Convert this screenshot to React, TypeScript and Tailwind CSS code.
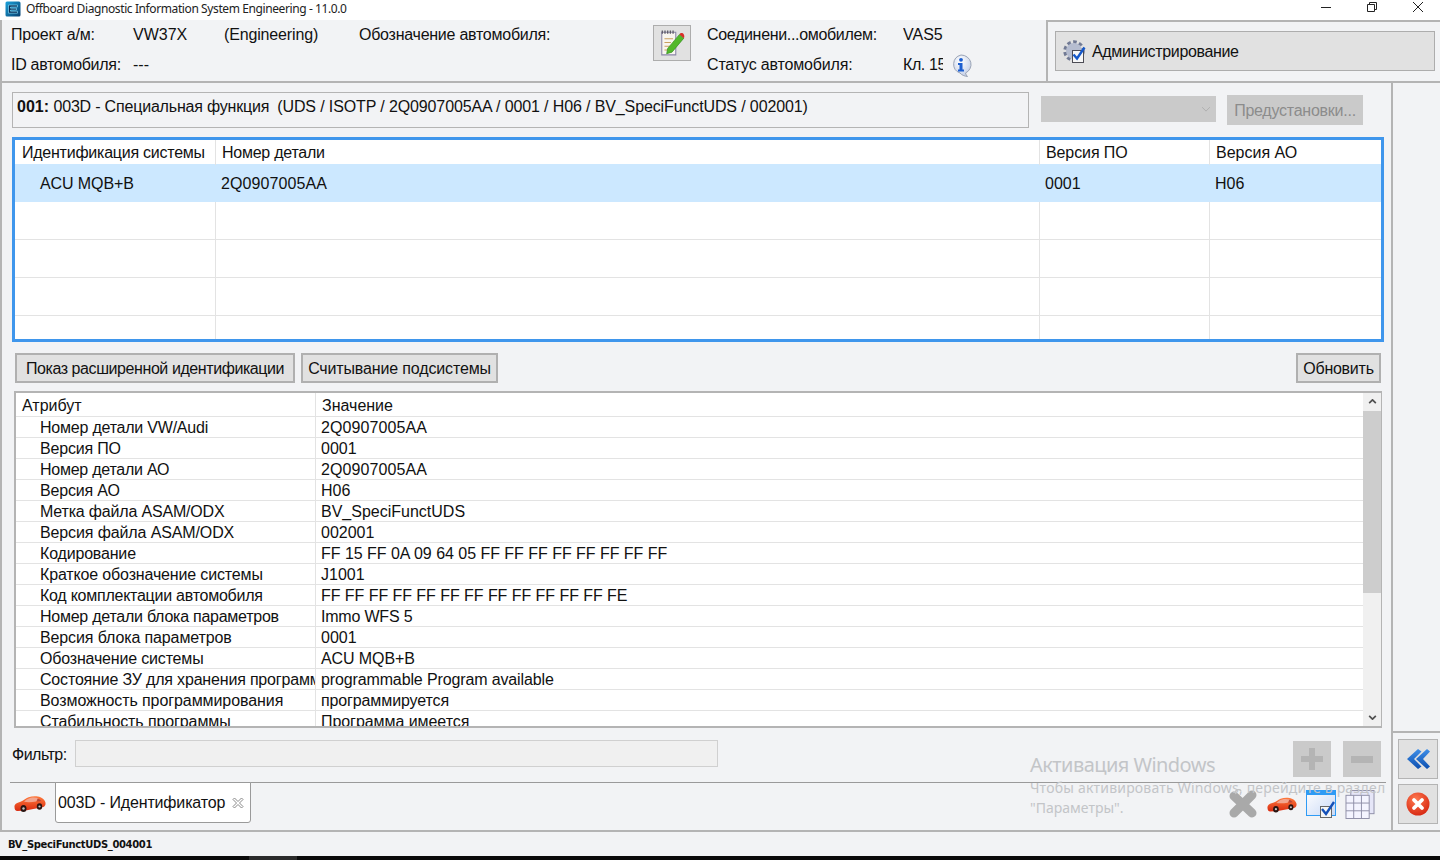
const attrs: [string, string, string?, string?][] = [
  ["Номер детали VW/Audi", "2Q0907005AA", "tracking-[0.1px]", "tracking-[-0.22px]"],
  ["Версия ПО", "0001"],
  ["Номер детали АО", "2Q0907005AA", "tracking-[0.1px]", "tracking-[-0.25px]"],
  ["Версия АО", "H06"],
  ["Метка файла ASAM/ODX", "BV_SpeciFunctUDS"],
  ["Версия файла ASAM/ODX", "002001", "", "tracking-[-0.12px]"],
  ["Кодирование", "FF 15 FF 0A 09 64 05 FF FF FF FF FF FF FF FF", "tracking-[-0.03px]"],
  ["Краткое обозначение системы", "J1001", "", "tracking-[-0.15px]"],
  ["Код комплектации автомобиля", "FF FF FF FF FF FF FF FF FF FF FF FF FE", "tracking-[-0.05px]", "tracking-[-0.25px]"],
  ["Номер детали блока параметров", "Immo WFS 5", "tracking-[-0.2px]", "tracking-[-0.25px]"],
  ["Версия блока параметров", "0001", "", "tracking-[-0.12px]"],
  ["Обозначение системы", "ACU MQB+B", "tracking-[-0.1px]"],
  ["Состояние ЗУ для хранения программ", "programmable Program available", "tracking-[-0.13px]"],
  ["Возможность программирования", "программируется", "tracking-[-0.12px]", "tracking-[-0.08px]"],
  ["Стабильность программы", "Программа имеется", "tracking-[-0.06px]", "tracking-[-0.1px]"],
];

function Car({ className }: { className?: string }) {
  return (
    <svg viewBox="0 0 32 20" className={className}>
      <defs>
        <linearGradient id="carBody" x1="0" y1="0" x2="0" y2="1">
          <stop offset="0" stopColor="#ff7a3c" />
          <stop offset="1" stopColor="#d92a10" />
        </linearGradient>
      </defs>
      <path d="M.5 14c-.3-2.500 2-4.300 6-5.300 3-.7 5-3.400 8-4.400 4-1.300 9-1.200 12 0 2.500 1 4.500 3 5 5.500.3 2-.5 3.500-2 4.200l-5 1-13 2.500-8 .5c-2 0-3-1.500-3-4z" fill="url(#carBody)" />
      <path d="M10 8.800c1.500-1.500 3.500-3 6-3.700 3-.8 6-.6 8.500.2l-2.500 3.300c-4 .6-8.500.8-12 .2z" fill="#f2a58f" />
      <path d="M23.500 5.500c1.500.4 3 1.300 3.800 2.500l-4.300.6z" fill="#b8473a" />
      <ellipse cx="9.500" cy="15.500" rx="3" ry="3.500" fill="#2a1512" />
      <ellipse cx="25.500" cy="13.500" rx="2.700" ry="3.200" fill="#2a1512" />
      <circle cx="9.500" cy="15.500" r="1.200" fill="#c4c4c4" />
      <circle cx="25.500" cy="13.500" r="1.100" fill="#c4c4c4" />
    </svg>
  );
}

function Btn({ children, className }: { children: React.ReactNode; className?: string }) {
  return (
    <div className={`h-[30px] pt-px flex items-center justify-center bg-[#e1e1e1] border-2 border-[#b0b0b0] text-[#111] whitespace-nowrap ${className ?? ""}`}>
      {children}
    </div>
  );
}

const colsTop = "grid grid-cols-[201px_824px_170px_1fr]";
const colsAttr = "grid grid-cols-[300px_1fr]";

export default function App() {
  return (
    <div className="w-[1440px] h-[860px] overflow-hidden flex flex-col bg-[#f2f3f5] text-[16px] text-[#111] relative font-['Liberation_Sans',Arial,sans-serif]">
      {/* title bar */}
      <div className="h-5 shrink-0 bg-white flex items-center pl-[5px]">
        <svg viewBox="0 0 16 16" className="w-[16px] h-[16px] mr-[5px] -mt-[3px]">
          <defs>
            <linearGradient id="odis" x1="0" y1="0" x2="1" y2="1">
              <stop offset="0" stopColor="#1aa2dc" />
              <stop offset="1" stopColor="#07406f" />
            </linearGradient>
          </defs>
          <rect x=".5" y=".5" width="15" height="15" rx="1.500" fill="url(#odis)" />
          <path d="M3.500 4h9v2h-7v1.200h6v1.800h-6v1.200h7v2h-9z" fill="#0a2d55" stroke="#7fd6f3" strokeWidth=".7" />
        </svg>
        <span className="text-[12px] -mt-[2px] text-[#222] font-['Noto_Sans',sans-serif] tracking-[-0.4px]">Offboard Diagnostic Information System Engineering - 11.0.0</span>
        <div className="ml-auto flex items-center -mt-[6px]">
          <div className="w-[46px] flex justify-center">
            <div className="w-[10px] h-px bg-[#222]" />
          </div>
          <svg viewBox="0 0 10 10" className="w-[10px] h-[10px] mx-[18px]" fill="none" stroke="#222">
            <path d="M.5 2.500h7v7h-7zM2.500 2.500v-2h7v7h-2" />
          </svg>
          <svg viewBox="0 0 10 10" className="w-[10px] h-[10px] ml-[18px] mr-[17px]" fill="none" stroke="#222">
            <path d="M0 0l10 10M10 0L0 10" />
          </svg>
        </div>
      </div>

      {/* header */}
      <div className="h-[63px] shrink-0 flex border-b-2 border-[#b4b4b4] border-l-2">
        <div className="w-[1044px] shrink-0 relative pl-[9px]">
          <div className="flex items-center h-[29px]">
            <span className="w-[122px] tracking-[-0.2px]">Проект а/м:</span>
            <span className="w-[91px]">VW37X</span>
            <span className="w-[135px] tracking-[-0.15px]">(Engineering)</span>
            <span className="tracking-[-0.25px]">Обозначение автомобиля:</span>
          </div>
          <div className="flex items-center h-[31px]">
            <span className="w-[122px] tracking-[-0.3px]">ID автомобиля:</span>
            <span>---</span>
          </div>
          <div className="absolute left-[651px] top-[5px] w-[38px] h-[36px] bg-[#e1e1e1] border border-[#adadad] flex items-center justify-center">
            <svg viewBox="0 0 24 26" className="w-[26px] h-[28px]">
              <path d="M2.500 3h13v21h-13z" fill="#f8f5ef" stroke="#8b86a8" />
              <path d="M3 1.500v3M5.500 1.500v3M8 1.500v3M10.500 1.500v3M13 1.500v3" stroke="#5d5a66" strokeWidth="1.200" />
              <path d="M5 9h8M5 12.500h6M5 16h5M5 19.500h8" stroke="#c9a05f" />
              <path d="M19 5l4 3.500-11 13-5 1.500 1-5z" fill="#52b82a" stroke="#2f8a1a" strokeWidth=".6" />
              <path d="M19 5c1-1.800 3-1.500 4 0 .6 1.200.5 2.500 0 3.500z" fill="#d92f2a" />
            </svg>
          </div>
          <div className="absolute left-[705px] top-0 w-[240px]">
            <div className="flex items-center h-[29px]">
              <span className="w-[196px] tracking-[-0.33px]">Соединени...омобилем:</span>
              <span className="w-[40px] overflow-hidden whitespace-nowrap">VAS5054</span>
            </div>
            <div className="flex items-center h-[31px]">
              <span className="w-[196px] tracking-[-0.17px]">Статус автомобиля:</span>
              <span className="w-[40px] overflow-hidden whitespace-nowrap tracking-[-0.4px]">Кл. 15</span>
            </div>
          </div>
          <svg viewBox="0 0 24 24" className="absolute left-[947px] top-[34px] w-[24px] h-[24px]">
            <defs>
              <radialGradient id="infoB" cx=".4" cy=".3" r=".8">
                <stop offset="0" stopColor="#ffffff" />
                <stop offset="1" stopColor="#bcc9e4" />
              </radialGradient>
            </defs>
            <path d="M12 1a10 9.500 0 0 1 4.500 18c.3 1.500 1 2.500 2 3.500-3-.3-6-1.500-7.500-3.500a10 9.500 0 0 1 1-18z" fill="url(#infoB)" stroke="#9aa3b5" />
            <circle cx="12" cy="5.800" r="1.900" fill="#1d5fd0" />
            <path d="M9 9h4.500v6.500H15V17.500H9v-2h1.500V11H9z" fill="#1d5fd0" />
          </svg>
        </div>
        <div className="flex-1 border-l-2 border-t-2 border-[#b4b4b4] pl-[7px] pt-[9px] pr-[5px]">
          <div className="h-[40px] pt-[2px] bg-[#e1e1e1] border border-[#adadad] flex items-center pl-[6px] gap-[4px]">
            <svg viewBox="0 0 24 24" className="w-[26px] h-[24px]">
              <circle cx="11" cy="11" r="9" fill="none" stroke="#717a94" strokeWidth="3.500" strokeDasharray="3.500 2.400" />
              <circle cx="11" cy="11" r="8" fill="#b6bdd0" />
              <rect x="9.500" y="10.500" width="11" height="12" fill="#f7f7f7" stroke="#4c4c55" />
              <path d="M10.500 14.500l3.500 4 7.500-11" fill="none" stroke="#1658c9" strokeWidth="2.400" />
            </svg>
            <span className="tracking-[-0.35px]">Администрирование</span>
          </div>
        </div>
      </div>

      {/* body */}
      <div className="flex-1 flex min-h-0">
        <div className="w-[1393px] shrink-0 flex flex-col border-x-2 border-[#b4b4b4] pl-[8px] pr-[7px]">
          {/* function line */}
          <div className="h-[54px] shrink-0 flex items-start pl-[2px]">
            <div className="w-[1017px] h-[36px] mt-[9px] border border-[#b4b4b4] pl-[4px] pt-[2px] whitespace-nowrap">
              <b>001:</b> <span className="tracking-[-0.19px]">003D - Специальная функция</span>
              <span className="ml-[8px] tracking-[-0.12px]">(UDS / ISOTP / 2Q0907005AA / 0001 / H06 / BV_SpeciFunctUDS / 002001)</span>
            </div>
            <div className="w-[175px] h-[26px] ml-[12px] mt-[13px] bg-[#cacaca] flex items-center justify-end pr-[6px]">
              <svg viewBox="0 0 10 6" className="w-[8px] h-[5px]" fill="none" stroke="#a8a8a8"><path d="M0 0l5 5 5-5" /></svg>
            </div>
            <div className="w-[136px] h-[30px] ml-[11px] mt-[12px] pt-[2px] bg-[#cacaca] text-[#8c8c8c] flex items-center justify-center tracking-[-0.25px]">Предустановки...</div>
          </div>

          {/* systems table */}
          <div className="w-[1372px] h-[205px] ml-[2px] shrink-0 border-[3px] border-[#3f96ec] bg-white overflow-hidden">
            <div className={`${colsTop} h-[24px]`}>
              <span className="pl-[7px] pt-px flex items-center border-r border-[#e3e3e3] whitespace-nowrap tracking-[-0.24px]">Идентификация системы</span>
              <span className="pl-[6px] pt-px flex items-center border-r border-[#e3e3e3] tracking-[-0.25px]">Номер детали</span>
              <span className="pl-[6px] pt-px flex items-center border-r border-[#e3e3e3] tracking-[-0.1px]">Версия ПО</span>
              <span className="pl-[6px] pt-px flex items-center">Версия АО</span>
            </div>
            <div className={`${colsTop} h-[38px] bg-[#cce8ff] items-center pt-[2px]`}>
              <span className="pl-[25px] tracking-[-0.1px]">ACU MQB+B</span>
              <span className="pl-[5px] tracking-[0.1px]">2Q0907005AA</span>
              <span className="pl-[5px]">0001</span>
              <span className="pl-[5px]">H06</span>
            </div>
            {[0, 1, 2, 3].map((i) => (
              <div key={i} className={`${colsTop} h-[38px] border-b border-[#e3e3e3]`}>
                <span className="border-r border-[#e3e3e3]" />
                <span className="border-r border-[#e3e3e3]" />
                <span className="border-r border-[#e3e3e3]" />
                <span />
              </div>
            ))}
          </div>

          {/* buttons */}
          <div className="h-[49px] shrink-0 flex items-center pl-[5px] pr-[3px] gap-[6px] pt-[3px]">
            <Btn className="w-[280px] tracking-[-0.42px]">Показ расширенной идентификации</Btn>
            <Btn className="w-[197px] tracking-[-0.15px]">Считывание подсистемы</Btn>
            <Btn className="w-[85px] ml-auto tracking-[-0.25px]">Обновить</Btn>
          </div>

          {/* attributes table */}
          <div className="w-[1368px] h-[337px] shrink-0 ml-[4px] border-y-2 border-l-2 border-r border-[#b4b4b4] bg-white flex overflow-hidden">
            <div className="flex-1 min-w-0 overflow-hidden">
              <div className={`${colsAttr} h-[24px] border-b border-[#e3e3e3]`}>
                <span className="pl-[6px] pt-[3px] leading-[20px] border-r border-[#e3e3e3]">Атрибут</span>
                <span className="pl-[6px] pt-[3px] leading-[20px]">Значение</span>
              </div>
              {attrs.map(([a, v, tr, tl]) => (
                <div key={a} className={`${colsAttr} h-[21px] border-b border-[#e3e3e3]`}>
                  <span className={`pl-[24px] pt-[2px] leading-[18px] border-r border-[#e3e3e3] overflow-hidden whitespace-nowrap ${tl ?? "tracking-[-0.18px]"}`}>{a}</span>
                  <span className={`pl-[5px] pt-[2px] leading-[18px] ${tr ?? ""}`}>{v}</span>
                </div>
              ))}
            </div>
            <div className="w-[18px] shrink-0 bg-[#f0f0f0] flex flex-col items-center">
              <svg viewBox="0 0 10 6" className="w-[9px] h-[5px] mt-[6px] mb-[7px]" fill="none" stroke="#505050" strokeWidth="2"><path d="M1 5l4-4 4 4" /></svg>
              <div className="w-full h-[182px] bg-[#cdcdcd]" />
              <svg viewBox="0 0 10 6" className="w-[9px] h-[5px] mt-auto mb-[6px]" fill="none" stroke="#505050" strokeWidth="2"><path d="M1 1l4 4 4-4" /></svg>
            </div>
          </div>

          {/* filter */}
          <div className="h-[54px] shrink-0 flex items-start pl-[2px] pr-[3px]">
            <span className="w-[63px] mt-[15px] tracking-[-0.5px]">Фильтр:</span>
            <div className="w-[643px] h-[27px] mt-[12px] bg-[#f0f0f0] border border-[#d0d0d0]" />
            <div className="ml-auto flex gap-[12px] mt-[13px]">
              <div className="w-[38px] h-[36px] bg-[#cacaca] flex items-center justify-center">
                <svg viewBox="0 0 22 22" className="w-[22px] h-[22px]"><path d="M8 0h6v8h8v6h-8v8H8v-8H0V8h8z" fill="#b4b4b4" /></svg>
              </div>
              <div className="w-[38px] h-[36px] bg-[#cacaca] flex items-center justify-center">
                <div className="w-[22px] h-[7px] bg-[#b4b4b4]" />
              </div>
            </div>
          </div>

          {/* tabs */}
          <div className="flex-1 -mr-[2px] border-t border-[#9a9a9a] flex items-start min-h-0">
            <div className="w-[45px] h-[40px] flex items-center pl-[4px]">
              <Car className="w-[32px] h-[20px]" />
            </div>
            <div className="h-[41px] -mt-px w-[196px] bg-white border border-[#9a9a9a] rounded-b-[3px] flex items-center pl-[2px]">
              <span className="tracking-[-0.15px]">003D - Идентификатор</span>
              <svg viewBox="0 0 12 12" className="w-[12px] h-[12px] ml-[7px]" fill="none" stroke="#8a8a8a">
                <path d="M1 2.500L2.500 1 6 4.500 9.500 1 11 2.500 7.500 6 11 9.500 9.500 11 6 7.500 2.500 11 1 9.500 4.500 6z" />
              </svg>
            </div>
            <div className="ml-auto flex items-center gap-[9px] pr-[11px] pt-[6px]">
              <svg viewBox="0 0 30 30" className="w-[30px] h-[30px]">
                <path d="M6 7l18 17M24 6L6 24" stroke="#a9a9a9" strokeWidth="9" strokeLinecap="round" />
                <path d="M8 5c-2-4 3-6 5-3" fill="none" stroke="#c4c4c4" strokeWidth="1.500" />
              </svg>
              <Car className="w-[30px] h-[20px]" />
              <svg viewBox="0 0 30 28" className="w-[30px] h-[28px]">
                <defs>
                  <linearGradient id="calFill" x1="0" y1="0" x2="1" y2="1">
                    <stop offset="0" stopColor="#ffffff" />
                    <stop offset="1" stopColor="#c8d8f5" />
                  </linearGradient>
                </defs>
                <rect x=".5" y=".5" width="29" height="25" fill="url(#calFill)" stroke="#2e9bf5" />
                <rect x="1" y="1" width="28" height="4" fill="#2e9bf5" />
                <rect x="14.500" y="16.500" width="11" height="11" fill="#f5f5f5" stroke="#666" />
                <path d="M16 19l4 5 8-12" fill="none" stroke="#1450b8" strokeWidth="2.400" />
              </svg>
              <svg viewBox="0 0 30 30" className="w-[30px] h-[29px]">
                <rect x="5.500" y=".5" width="24" height="24" fill="#e6e6f8" stroke="#8f8fa8" />
                <rect x=".5" y="5.500" width="24" height="24" fill="#f4f4ff" stroke="#8f8fa8" />
                <path d="M8.500 5.500v24M16.500 5.500v24M.5 13.500h24M.5 21.500h24" stroke="#8f8fa8" />
              </svg>
            </div>
          </div>
        </div>

        {/* right column */}
        <div className="flex-1 flex flex-col justify-end">
          <div className="border-t-2 border-[#b4b4b4] pl-[5px] pb-[6px] pt-[6px] flex flex-col gap-[5px]">
            <div className="w-[40px] h-[40px] bg-[#e1e1e1] border border-[#b4b4b4] flex items-center justify-center">
              <svg viewBox="0 0 24 22" className="w-[24px] h-[22px]">
                <defs>
                  <linearGradient id="chev" x1="0" y1="0" x2="0" y2="1">
                    <stop offset="0" stopColor="#3f8fe8" />
                    <stop offset="1" stopColor="#0c4fb0" />
                  </linearGradient>
                </defs>
                <path d="M12 1L1 11l11 10 3.500-2.500L8 11l7.500-7.500z M21 1L10 11l11 10 3-2.500L17 11l7-7.500z" fill="url(#chev)" />
              </svg>
            </div>
            <div className="w-[40px] h-[40px] bg-[#e1e1e1] border border-[#b4b4b4] flex items-center justify-center">
              <svg viewBox="0 0 24 24" className="w-[24px] h-[24px]">
                <defs>
                  <radialGradient id="stopR" cx=".4" cy=".3" r=".8">
                    <stop offset="0" stopColor="#ff7a50" />
                    <stop offset="1" stopColor="#d3200c" />
                  </radialGradient>
                </defs>
                <circle cx="12" cy="12" r="11.500" fill="url(#stopR)" />
                <path d="M8 8l8 8M16 8l-8 8" stroke="#fff" strokeWidth="3.800" strokeLinecap="round" />
              </svg>
            </div>
          </div>
        </div>
      </div>

      {/* status bar */}
      <div className="h-[26px] shrink-0 border-t-2 border-[#b4b4b4] pl-[8px] flex items-center text-[10px] font-bold tracking-[-0.35px] font-['DejaVu_Sans',sans-serif]">
        BV_SpeciFunctUDS_004001
      </div>
      <div className="h-[4px] shrink-0 bg-[#0a0a0a] pl-[249px]">
        <div className="w-[48px] h-full bg-[#2b2b2b]" />
      </div>

      {/* activation watermark */}
      <div className="absolute left-[1030px] top-[751px] text-[#c3c5c8] pointer-events-none font-['Noto_Sans',sans-serif]">
        <div className="text-[20px] leading-[27px] tracking-[-0.55px]">Активация Windows</div>
        <div className="text-[14px] leading-[20px] whitespace-nowrap tracking-[0.2px]">Чтобы активировать Windows, перейдите в раздел</div>
        <div className="text-[14px] leading-[20px]">"Параметры".</div>
      </div>
    </div>
  );
}
